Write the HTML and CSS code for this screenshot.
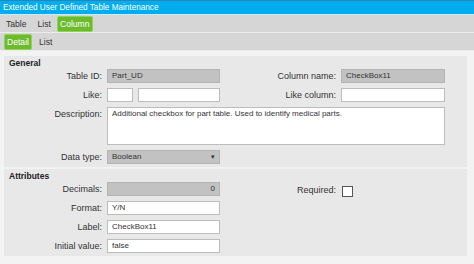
FILE: index.html
```html
<!DOCTYPE html>
<html lang="en">
<head>
  <meta charset="UTF-8">
  <title>Extended User Defined Table Maintenance</title>
  <link rel="stylesheet" href="styles.css">
</head>
<body>
  <div class="titlebar">Extended User Defined Table Maintenance</div>

  <div class="tabs">
    <span class="tab">Table</span>
    <span class="tab">List</span>
    <span class="tab active">Column</span>
  </div>
  <div class="tabs sub">
    <span class="tab active">Detail</span>
    <span class="tab">List</span>
  </div>

  <div class="content">
    <div class="panel">
      <div class="panel-title">General</div>
      <div class="grid">
        <label>Table ID:</label>
        <div class="field ro">Part_UD</div>
        <label>Column name:</label>
        <div class="field ro">CheckBox11</div>

        <label>Like:</label>
        <div class="pair">
          <div class="field small"></div>
          <div class="field grow"></div>
        </div>
        <label>Like column:</label>
        <div class="field"></div>

        <label class="top">Description:</label>
        <div class="field area wide">Additional checkbox for part table. Used to identify medical parts.</div>

        <label>Data type:</label>
        <div class="field ro select">Boolean<span class="caret">&#9662;</span></div>
      </div>
    </div>

    <div class="panel">
      <div class="panel-title">Attributes</div>
      <div class="grid">
        <label>Decimals:</label>
        <div class="field ro num">0</div>
        <label class="low">Required:</label>
        <div class="check-cell"><span class="check"></span></div>

        <label>Format:</label>
        <div class="field">Y/N</div>
        <div></div><div></div>

        <label>Label:</label>
        <div class="field">CheckBox11</div>
        <div></div><div></div>

        <label>Initial value:</label>
        <div class="field">false</div>
      </div>
    </div>
  </div>
</body>
</html>
```

FILE: styles.css
```css
body {
  margin: 0;
  font-family: "Liberation Sans", Arial, sans-serif;
  font-size: 9px;
  color: #222;
  background: #f3f3f3;
}
.titlebar {
  background: #00aeef;
  border-top: 1px solid #2b86b8;
  border-bottom: 1px solid #cfe9f5;
  color: #fff;
  height: 13px;
  line-height: 13px;
  padding-left: 3px;
  font-size: 8.2px;
}
.tabs {
  background: #d6d6d6;
  height: 17px;
  display: flex;
  align-items: center;
  padding-left: 6px;
  border-bottom: 1px solid #ececec;
  font-size: 8.6px;
}
.tabs .tab:first-child {
  margin-right: 11px;
}
.tabs .tab.active {
  margin-left: 6px;
}
.tabs.sub {
  padding-left: 4px;
}
.tabs.sub .tab.active {
  margin-left: 0;
  margin-right: 7px;
}
.tab {
  color: #333;
}
.tab.active {
  background: #6cbb2d;
  color: #fff;
  border: 1px solid #8fd45a;
  border-radius: 2px;
  padding: 0 2px;
  height: 14px;
  line-height: 14px;
}
.content {
  padding: 5px 7px 10px 4px;
}
.panel {
  background: #e8e8e8;
  margin-bottom: 2px;
  padding: 1px 22px 3px 0;
}
.panel-title {
  font-weight: bold;
  color: #222;
  padding: 1px 0 0 5px;
  height: 10px;
  line-height: 10px;
  font-size: 8.5px;
}
.grid {
  display: grid;
  grid-template-columns: 98px 113px 111px 104px;
  column-gap: 5px;
  row-gap: 5px;
  margin-top: 1px;
}
label {
  text-align: right;
  line-height: 14px;
  height: 14px;
  color: #333;
}
label.top {
  align-self: start;
}
.field {
  height: 12px;
  line-height: 12px;
  background: #fff;
  border: 1px solid #bcbcbc;
  padding: 0 4px;
  font-size: 8px;
  color: #333;
  white-space: nowrap;
  overflow: hidden;
}
.field.ro {
  background: #c2c2c2;
  border-color: #b4b4b4;
}
.field.num {
  text-align: right;
}
.pair {
  display: flex;
  gap: 5px;
}
.field.small {
  width: 16px;
}
.field.grow {
  flex: 1;
}
.field.area {
  height: 36px;
}
.field.wide {
  grid-column: 2 / 5;
}
.field.select {
  display: flex;
  justify-content: space-between;
}
.caret {
  font-size: 7px;
  color: #333;
}
.check-cell {
  display: flex;
  align-items: flex-end;
  padding-left: 1px;
}
.check {
  width: 9px;
  height: 9px;
  border: 1px solid #555;
  background: #fff;
  margin-bottom: -1px;
}
label.low {
  line-height: 16px;
  height: 14px;
  align-self: end;
}
```
